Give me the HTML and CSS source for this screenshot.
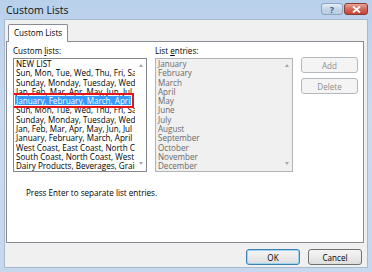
FILE: index.html
```html
<!DOCTYPE html>
<html lang="en">
<head>
  <meta charset="UTF-8" />
  <title>Custom Lists</title>
  <link rel="stylesheet" href="styles.css">
</head>
<body>
  <div class="window">
    <div class="titlebar">
      <span class="title">Custom Lists</span>
      <div class="caption-btns">
        <span class="cap-help">?</span>
        <span class="cap-close">
          <svg width="9" height="7" viewBox="0 0 9 7"><path d="M1 0.5 L8 6.5 M8 0.5 L1 6.5" stroke="#fff" stroke-width="1.8"/></svg>
        </span>
      </div>
    </div>

    <div class="client">
      <div class="tabs">
        <div class="tab">Custom Lists</div>
      </div>

      <div class="panel">
        <div class="cols">
          <div class="col-list">
            <div class="label">Custom <u>l</u>ists:</div>
            <div class="listbox">
              <div class="items">
                <div class="row">NEW LIST</div>
                <div class="row">Sun, Mon, Tue, Wed, Thu, Fri, Sat</div>
                <div class="row">Sunday, Monday, Tuesday, Wednesday</div>
                <div class="row">Jan, Feb, Mar, Apr, May, Jun, Jul</div>
                <div class="row selected">January, February, March, April</div>
                <div class="row">Sun, Mon, Tue, Wed, Thu, Fri, Sat</div>
                <div class="row">Sunday, Monday, Tuesday, Wednesday</div>
                <div class="row">Jan, Feb, Mar, Apr, May, Jun, Jul</div>
                <div class="row">January, February, March, April</div>
                <div class="row">West Coast, East Coast, North Coast</div>
                <div class="row">South Coast, North Coast, West Coast</div>
                <div class="row">Dairy Products, Beverages, Grains</div>
              </div>
              <div class="scroll">
                <span class="arrow up"></span>
                <span class="arrow down"></span>
              </div>
            </div>
          </div>

          <div class="col-entries">
            <div class="label">List <u>e</u>ntries:</div>
            <div class="listbox entries">
              <div class="items">
                <div class="row">January</div>
                <div class="row">February</div>
                <div class="row">March</div>
                <div class="row">April</div>
                <div class="row">May</div>
                <div class="row">June</div>
                <div class="row">July</div>
                <div class="row">August</div>
                <div class="row">September</div>
                <div class="row">October</div>
                <div class="row">November</div>
                <div class="row">December</div>
              </div>
              <div class="scroll">
                <span class="arrow up"></span>
                <span class="arrow down"></span>
              </div>
            </div>
          </div>

          <div class="col-btns">
            <button class="btn disabled">Add</button>
            <button class="btn disabled">Delete</button>
          </div>
        </div>

        <p class="hint">Press Enter to separate list entries.</p>
      </div>

      <div class="footer">
        <button class="btn default">OK</button>
        <button class="btn">Cancel</button>
      </div>
    </div>
  </div>
</body>
</html>
```

FILE: styles.css
```css
* {
  box-sizing: border-box;
}

body {
  margin: 0;
  font-family: "Open Sans", sans-serif;
  font-size: 8.1px;
  color: #000;
}

.window {
  width: 372px;
  height: 272px;
  background: linear-gradient(#b9d0eb, #cbdcf1 40%, #c6d8ee);
  padding: 0 4px 4px;
  display: flex;
  flex-direction: column;
}

.titlebar {
  height: 19px;
  display: flex;
  align-items: flex-start;
  justify-content: space-between;
}

.title {
  font-size: 10.5px;
  line-height: 20px;
  padding-left: 2px;
  color: #111;
}

.caption-btns {
  display: flex;
  gap: 1px;
  padding-top: 3px;
}

.cap-help, .cap-close {
  height: 12px;
  border-radius: 3px;
  display: flex;
  align-items: center;
  justify-content: center;
}

.cap-help {
  width: 22px;
  border: 1px solid #8ea3bd;
  background: linear-gradient(#e4edf7, #c5d5e8 50%, #b7cbe3);
  color: #4a5d78;
  font-size: 9px;
  font-weight: bold;
}

.cap-close {
  width: 24px;
  border: 1px solid #8b3a30;
  background: linear-gradient(#e9a597, #d3685a 50%, #c5453a);
}

.client {
  flex: 1;
  background: #f0f0f0;
  border: 1px solid #a8b9cc;
  padding: 4px 3px 0 1px;
  display: flex;
  flex-direction: column;
}

.tabs {
  display: flex;
  padding-left: 2px;
  margin-bottom: -1px;
}

.tab {
  width: 60px;
  height: 18px;
  background: #fff;
  border: 1px solid #898c95;
  border-bottom: none;
  border-radius: 2px 2px 0 0;
  padding-left: 5px;
  line-height: 16px;
  position: relative;
  z-index: 1;
}

.panel {
  height: 202px;
  background: #fff;
  border: 1px solid #898c95;
  padding: 4px 5px 0 6px;
}

.cols {
  display: flex;
  gap: 8px;
}

.col-list {
  width: 134px;
}

.col-entries {
  width: 138px;
}

.label {
  line-height: 10px;
  height: 10px;
  margin-bottom: 2px;
}

.listbox {
  height: 114px;
  border: 1px solid #828790;
  background: #fff;
  display: flex;
}

.listbox .items {
  flex: 1;
  overflow: hidden;
  white-space: nowrap;
  padding-left: 2px;
}

.row {
  line-height: 9.3px;
  height: 9.3px;
}

.row.selected {
  background: #3399ff;
  color: #fff;
  margin: 0 4px 0 -1px;
  padding-left: 1px;
  outline: 2.5px solid #e3161b;
  outline-offset: 1px;
  position: relative;
}

.listbox.entries {
  background: #f0f0f0;
  border-color: #b0b4b8;
  color: #6a6a6a;
}

.scroll {
  width: 11px;
  display: flex;
  flex-direction: column;
  justify-content: space-between;
  align-items: center;
  padding: 5px 0 6px;
}

.arrow {
  width: 0;
  height: 0;
  border-left: 2.5px solid transparent;
  border-right: 2.5px solid transparent;
}

.arrow.up {
  border-bottom: 3px solid #a6a6a6;
}

.arrow.down {
  border-top: 3px solid #a6a6a6;
}

.col-btns {
  width: 57px;
  display: flex;
  flex-direction: column;
  gap: 5px;
  padding-top: 11px;
}

.btn {
  height: 16px;
  padding: 0;
  font-family: inherit;
  font-size: inherit;
  border-radius: 3px;
  border: 1px solid #707070;
  background: linear-gradient(#f4f4f4, #ebebeb 50%, #dcdcdc);
  color: #000;
}

.btn.disabled {
  border-color: #b5b8bb;
  background: #f4f4f4;
  color: #8d8d8d;
}

.hint {
  margin: 16px 0 0;
  padding-left: 13px;
  line-height: 10px;
}

.footer {
  flex: 1;
  display: flex;
  justify-content: flex-end;
  align-items: flex-start;
  gap: 8px;
  padding: 6px 2px 0 0;
}

.footer .btn {
  width: 54px;
}

.btn.default {
  border-color: #3c7fb1;
  box-shadow: inset 0 0 0 1px #9fd3f2;
}
```
